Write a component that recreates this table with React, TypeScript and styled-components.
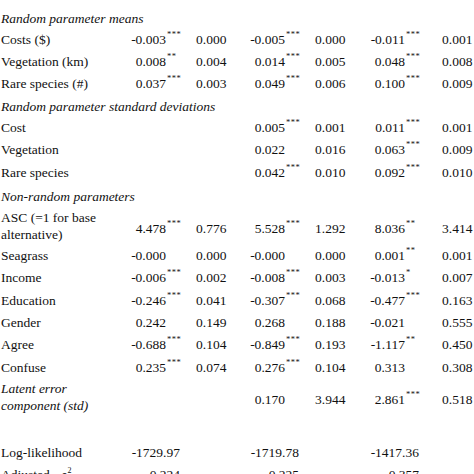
import React from "react";
import styled, { createGlobalStyle } from "styled-components";

const GlobalStyle = createGlobalStyle`
  html, body {
    margin: 0;
    padding: 0;
    background: #ffffff;
  }
  body {
    width: 474px;
    height: 474px;
    overflow: hidden;
  }
`;

const Table = styled.div`
  width: 481px;
  padding: 7px 0 0 1px;
  font-family: "Liberation Serif", "Times New Roman", serif;
  font-size: 13.5px;
  color: #111111;
`;

const Line = styled.div<{ $h: number }>`
  display: grid;
  grid-template-columns: 119px 62px 46px 73px 46px 74px 60px;
  align-items: center;
  height: ${(p) => p.$h}px;
  line-height: 17px;
`;

const Gap = styled.div<{ $h: number }>`
  height: ${(p) => p.$h}px;
`;

const Heading = styled.div`
  grid-column: 1 / -1;
  font-style: italic;
  white-space: nowrap;
`;

const Label = styled.div`
  white-space: nowrap;
`;

const Italic = styled.span`
  font-style: italic;
`;

const Sup = styled.sup`
  font-size: 8px;
  vertical-align: 6px;
  line-height: 0;
`;

const Coef = styled.div<{ $low?: boolean }>`
  display: flex;
  justify-content: flex-end;
  align-items: flex-start;
  padding-top: ${(p) => (p.$low ? 5 : 0)}px;
`;

const Stars = styled.span`
  width: 15px;
  font-size: 8.5px;
  line-height: 8px;
  letter-spacing: 0.5px;
  padding-left: 1px;
  margin-top: -1px;
`;

const Se = styled.div<{ $low?: boolean; $last?: boolean }>`
  text-align: left;
  padding-left: ${(p) => (p.$last ? 21 : 14)}px;
  padding-top: ${(p) => (p.$low ? 5 : 0)}px;
`;

const Fit = styled.div`
  text-align: right;
  padding-right: 2px;
`;

type Cell = { v: string; s?: string };

type DataRow = {
  kind: "data";
  label: React.ReactNode;
  h: number;
  cells: (Cell | null)[];
};

type HeadRow = { kind: "head"; label: React.ReactNode; h: number };
type GapRow = { kind: "gap"; h: number };
type FitRow = { kind: "fit"; label: React.ReactNode; h: number; vals: string[] };

type Row = DataRow | HeadRow | GapRow | FitRow;

const c = (v: string, s?: string): Cell => ({ v, s });

const rows: Row[] = [
  { kind: "head", label: "Random parameter means", h: 22 },
  {
    kind: "data",
    label: "Costs ($)",
    h: 21,
    cells: [c("-0.003", "***"), c("0.000"), c("-0.005", "***"), c("0.000"), c("-0.011", "***"), c("0.001")],
  },
  {
    kind: "data",
    label: "Vegetation (km)",
    h: 22,
    cells: [c("0.008", "**"), c("0.004"), c("0.014", "***"), c("0.005"), c("0.048", "***"), c("0.008")],
  },
  {
    kind: "data",
    label: "Rare species (#)",
    h: 23,
    cells: [c("0.037", "***"), c("0.003"), c("0.049", "***"), c("0.006"), c("0.100", "***"), c("0.009")],
  },
  { kind: "head", label: "Random parameter standard deviations", h: 22 },
  {
    kind: "data",
    label: "Cost",
    h: 21,
    cells: [null, null, c("0.005", "***"), c("0.001"), c("0.011", "***"), c("0.001")],
  },
  {
    kind: "data",
    label: "Vegetation",
    h: 22,
    cells: [null, null, c("0.022"), c("0.016"), c("0.063", "***"), c("0.009")],
  },
  {
    kind: "data",
    label: "Rare species",
    h: 25,
    cells: [null, null, c("0.042", "***"), c("0.010"), c("0.092", "***"), c("0.010")],
  },
  { kind: "head", label: "Non-random parameters", h: 23 },
  {
    kind: "data",
    label: (
      <>
        ASC (=1 for base
        <br />
        alternative)
      </>
    ),
    h: 36,
    cells: [c("4.478", "***"), c("0.776"), c("5.528", "***"), c("1.292"), c("8.036", "**"), c("3.414")],
  },
  {
    kind: "data",
    label: "Seagrass",
    h: 22,
    cells: [c("-0.000"), c("0.000"), c("-0.000"), c("0.000"), c("0.001", "**"), c("0.001")],
  },
  {
    kind: "data",
    label: "Income",
    h: 23,
    cells: [c("-0.006", "***"), c("0.002"), c("-0.008", "***"), c("0.003"), c("-0.013", "*"), c("0.007")],
  },
  {
    kind: "data",
    label: "Education",
    h: 22,
    cells: [c("-0.246", "***"), c("0.041"), c("-0.307", "***"), c("0.068"), c("-0.477", "***"), c("0.163")],
  },
  {
    kind: "data",
    label: "Gender",
    h: 22,
    cells: [c("0.242"), c("0.149"), c("0.268"), c("0.188"), c("-0.021"), c("0.555")],
  },
  {
    kind: "data",
    label: "Agree",
    h: 23,
    cells: [c("-0.688", "***"), c("0.104"), c("-0.849", "***"), c("0.193"), c("-1.117", "**"), c("0.450")],
  },
  {
    kind: "data",
    label: "Confuse",
    h: 22,
    cells: [c("0.235", "***"), c("0.074"), c("0.276", "***"), c("0.104"), c("0.313"), c("0.308")],
  },
  {
    kind: "data",
    label: (
      <Italic>
        Latent error
        <br />
        component (std)
      </Italic>
    ),
    h: 37,
    cells: [null, null, c("0.170"), c("3.944"), c("2.861", "***"), c("0.518")],
  },
  { kind: "gap", h: 26 },
  { kind: "fit", label: "Log-likelihood", h: 22, vals: ["-1729.97", "-1719.78", "-1417.36"] },
  {
    kind: "fit",
    label: (
      <>
        Adjusted - <Italic>ρ</Italic>
        <Sup>2</Sup>
      </>
    ),
    h: 22,
    vals: ["0.224", "0.225", "0.357"],
  },
];

const App = () => {
  return (
    <>
      <GlobalStyle />
      <Table>
        {rows.map((r, i) => {
          if (r.kind === "gap") return <Gap key={i} $h={r.h} />;
          if (r.kind === "head")
            return (
              <Line key={i} $h={r.h}>
                <Heading>{r.label}</Heading>
              </Line>
            );
          if (r.kind === "fit")
            return (
              <Line key={i} $h={r.h}>
                <Label>{r.label}</Label>
                {r.vals.map((v, j) => (
                  <React.Fragment key={j}>
                    <Fit>{v}</Fit>
                    <span />
                  </React.Fragment>
                ))}
              </Line>
            );
          return (
            <Line key={i} $h={r.h}>
              <Label>{r.label}</Label>
              {r.cells.map((cell, j) =>
                j % 2 === 0 ? (
                  <Coef key={j} $low={r.h > 30}>
                    {cell && (
                      <>
                        <span>{cell.v}</span>
                        <Stars>{cell.s}</Stars>
                      </>
                    )}
                  </Coef>
                ) : (
                  <Se key={j} $low={r.h > 30} $last={j === 5}>
                    {cell?.v}
                  </Se>
                )
              )}
            </Line>
          );
        })}
      </Table>
    </>
  );
};

export default App;
